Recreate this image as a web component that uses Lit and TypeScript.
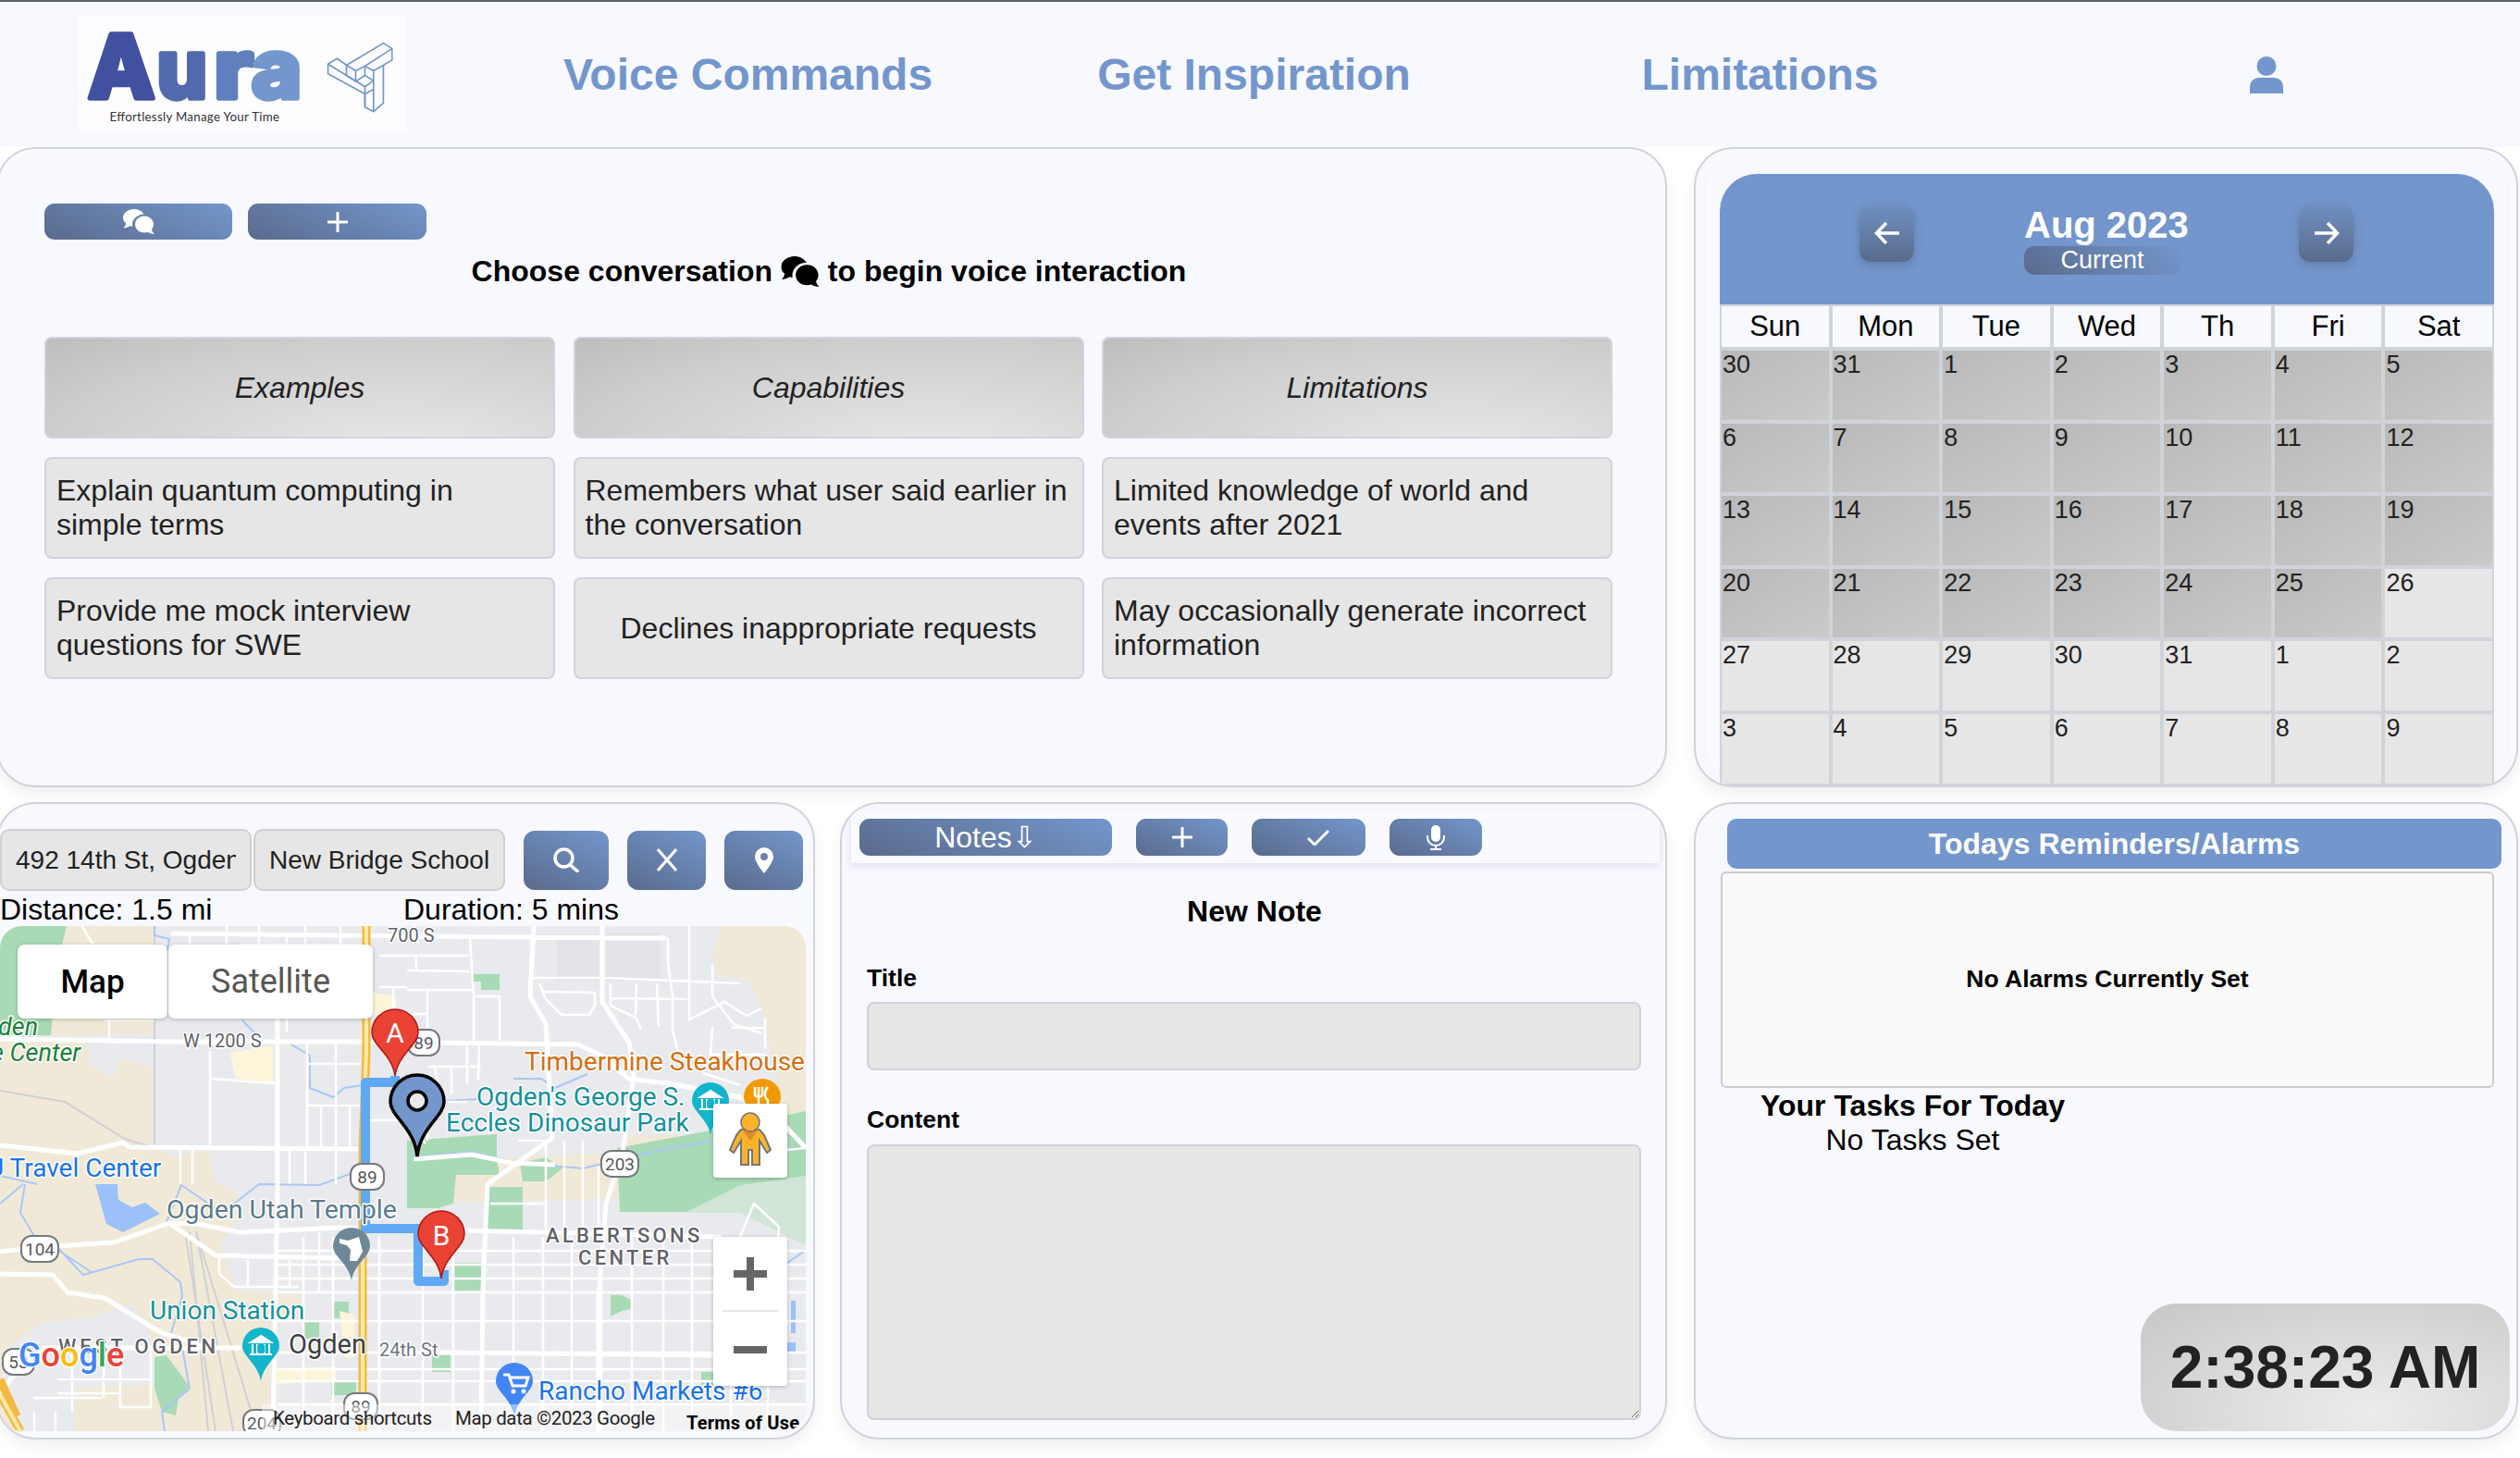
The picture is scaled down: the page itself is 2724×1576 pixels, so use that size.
import { LitElement, html, css, svg } from "lit";
import { customElement } from "lit/decorators.js";

const chatIcon = (cls: string) => svg`
  <svg class=${cls} viewBox="0 0 34 27" fill="currentColor">
    <mask id="chat-cut" maskUnits="userSpaceOnUse" x="0" y="0" width="34" height="27">
      <rect width="34" height="27" fill="#fff"/>
      <ellipse cx="23" cy="17" rx="13" ry="11.500" fill="#000"/>
    </mask>
    <path mask="url(#chat-cut)" d="M12 0C18.500 0 23.500 4.300 23.500 9.500C23.500 14.700 18.500 19 12 19C10.500 19 9 18.800 7.600 18.300C6 19.500 3.500 20.400 .5 20.500C2 19 3 17.200 3.200 15.500C1.200 13.800 0 11.800 0 9.500C0 4.300 5.500 0 12 0Z"/>
    <path d="M23 7.500C28.500 7.500 33 11.500 33 16.500C33 18.600 32.200 20.500 31 22C31.200 23.700 32.200 25.500 34 27C30.800 26.900 28.500 26.100 27 25C25.800 25.300 24.400 25.500 23 25.500C17.500 25.500 13 21.500 13 16.500C13 11.500 17.500 7.500 23 7.500Z"/>
  </svg>`;

const plusIcon = svg`<svg class="ic22" viewBox="0 0 22 22" fill="none" stroke="currentColor" stroke-width="3"><path d="M11 0v22M0 11h22"/></svg>`;

@customElement("route-map")
class RouteMap extends LitElement {
  static styles = css`
    :host {
      display: block;
      position: relative;
      width: 871px;
      height: 546px;
      overflow: hidden;
      border-radius: 24px;
      background: #e8eaed;
    }

    svg.canvas {
      display: block;
      width: 871px;
      height: 546px;
    }

    text {
      font-family: Roboto, "Liberation Sans", sans-serif;
    }

    .halo {
      paint-order: stroke;
      stroke: #fff;
      stroke-width: 3px;
      stroke-linejoin: round;
    }

    .type-btn {
      position: absolute;
      top: 20px;
      height: 80px;
      background: #fff;
      border-radius: 7px;
      box-shadow: 0 1px 4px rgba(0, 0, 0, 0.25);
      display: flex;
      align-items: center;
      justify-content: center;
      font-family: Roboto, sans-serif;
    }

    .type-map {
      left: 19px;
      width: 162px;
      color: #000;
      font-size: 35px;
      font-weight: 500;
    }

    .type-sat {
      left: 182px;
      width: 221px;
      color: #565656;
      font-size: 36px;
    }

    .ctl {
      position: absolute;
      left: 771px;
      width: 80px;
      background: #fff;
      border-radius: 3px;
      box-shadow: 0 1px 4px rgba(0, 0, 0, 0.25);
    }

    .pegman {
      top: 192px;
      height: 80px;
    }

    .zoomer {
      top: 336px;
      height: 161px;
    }

    .ctl svg {
      display: block;
      width: 80px;
      height: 100%;
    }
  `;

  private shield(x: number, y: number, label: string, w = 34) {
    return svg`
      <rect x=${x - w / 2} y=${y - 14} width=${w} height="28" rx="11" fill="#fff" stroke="#75787c" stroke-width="2"/>
      <text x=${x} y=${y + 7} text-anchor="middle" font-size="19" fill="#55585c">${label}</text>`;
  }

  private pin(cx: number, cy: number, r: number, tip: number, fill: string, stroke = "none", sw = 0) {
    const d = `M${cx} ${tip}C${cx - 3} ${cy + r * 0.95} ${cx - r} ${cy + r * 0.55} ${cx - r} ${cy}A${r} ${r} 0 1 1 ${cx + r} ${cy}C${cx + r} ${cy + r * 0.55} ${cx + 3} ${cy + r * 0.95} ${cx} ${tip}Z`;
    return svg`<path d=${d} fill=${fill} stroke=${stroke} stroke-width=${sw}/>`;
  }

  render() {
    // street grid south of 12th, the rest of the roads are listed by hand
    const southH = [351, 366, 381, 396, 427, 461, 479, 492, 517];
    const southV = [328, 360, 410, 457, 490, 555, 587, 618, 650, 683, 717, 748, 790, 830];
    const grid = [
      ...southH.map((y) => `M300 ${y}H871`),
      ...southV.map((x) => `M${x} 336V546`),
    ].join("");
    const minor = [
      "M440 32H507M450 32V48M440 48L508 49M508 14L512 76V124M462 69V124M440 69H512M512 76H540V124",
      "M573 56H653L800 62M660 62V86L687 99L693 111M660 78L743 79M688 62L687 96M710 62L712 109",
      "M722 13V39L727 76V112L733 136M745 0V101L783 82L807 97L823 89M770 42V76L793 106L823 116",
      "M827 99V133M770 109L768 139H827M790 110H827M583 62L590 79L607 96H637L643 86V72L587 71",
      "M505 129V170M518 129L517 166M488 152V181M462 152H520M470 152L476 181M760 159L800 172",
      "M227 135V240M227 165L297 170M332 125V240M363 125V240M332 149H390M332 194H390M347 194V240M378 194V240",
      "M195 240V279M208 240V279M313 240V279M330 240V279M363 240V279M112 102H167M118 102V122",
      "M237 359V376L253 390H323M268 361V390M313 361V390M345 355V395M345 331V359",
      "M78 458V525M112 458V510M130 458V520H163V458M62 490H163M62 505H130M36 510H110M37 525V546M60 525V546",
      "M590 232V329M610 232V329M630 232V329M647 260V336M560 232H590M530 300H590M400 210H440L460 235",
      "M440 190H505M462 190V232M410 32H440M410 66H440M425 66V125M410 95H462M310 10V115M205 10V60",
      "M88 -1L100 19M100 19L112 60M245 0V20M280 0V20M330 0V20M368 0V20M260 20H395",
      "M800 336L815 300L842 325L838 380M790 350H830M773 250L870 240",
    ].join("");
    const major = [
      "M0 122L180 125H395L625 128L650 140L680 165L722 170L800 185L845 212L871 240",
      "M185 8L440 11L720 13",
      "M300 100V279L295 546",
      "M651 0V82L680 126L685 162L673 245L655 300L647 400V546",
      "M577 0L573 76L590 106L597 229L527 279L522 392L520 546",
      "M0 352L43 347L123 342L183 321L213 322L260 331L367 326L587 331L780 336",
      "M183 321L233 356L367 359",
      "M0 376L57 377L73 396L113 402L173 439L225 456",
      "M45 456H260M473 461L773 464",
      "M0 237L83 246L133 234L140 239L393 241",
      "M447 252L510 247L553 256L600 258",
      "M0 506L20 478L50 456",
    ].join("");
    const creek = [
      "M0 300L25 279M27 279L22 310L40 340L60 345L90 377L150 360L165 360L195 385L197 400L185 440",
      "M55 345L100 375M167 0V10L183 14L180 30",
      "M262 102L275 115M315 128L335 140L335 175L360 185L372 175L440 165L460 190L520 187",
      "M555 165H585L600 175L635 160M445 250L510 244L560 256L630 262L700 245L780 230L800 215",
      "M840 372L871 350M195 445L205 500L175 525L178 546M0 270L40 279M180 320L196 280L240 310L280 279L345 280L395 262",
    ].join("");

    return html`
      <svg class="canvas" viewBox="0 0 871 546">
        <!-- land -->
        <path fill="#f1e9d7" d="M72 0H167V118H55L62 40Z"/>
        <path fill="#a8dab5" d="M0 0H72L62 40L55 118H0Z"/>
        <path fill="#f1e9d7" d="M0 125H95L97 150L122 165L130 143L165 152L167 240L190 250L225 240L232 277L255 285L262 310L238 345L255 395L325 395L325 425L292 425V546H0Z"/>
        <path fill="#e8eaed" d="M43 430L100 422L143 409L160 436L167 459L167 496L83 499L80 546H20L0 496L10 456Z"/>
        <path fill="#f1e9d7" d="M780 0H871V250L843 200L827 99L810 59L777 54L770 32Z"/>
        <path fill="#f1e9d7" d="M440 245L560 250L672 245L673 226L773 226L800 215L871 240V290L440 300Z"/>
        <path fill="#a8dab5" d="M440 232L537 225V252L540 269L493 269L490 300L473 305H440Z"/>
        <path fill="#a8dab5" d="M527 282H565V329H527ZM562 256L590 250L608 262L590 276L565 276ZM667 240L800 215L871 200V279L773 309H670Z"/>
        <path fill="#d0e5d5" d="M740 310L800 280L871 270V345L840 330L800 310H750Z"/>
        <path fill="#a8dab5" d="M512 52H540V69H520V60H512ZM490 364H520V394H490ZM660 399H672L682 404V414L672 416L660 422ZM467 462H487V482H467ZM758 482H772V496H758ZM360 406H377V424H360ZM327 427H345V446H327ZM358 491H385V507H358ZM167 466L180 464L205 498L193 510L190 529L175 525L167 500Z"/>
        <path fill="#fdf5d9" d="M248 137L295 129V169L255 165ZM403 72L428 76V96H403ZM295 479L363 476V490L295 496ZM367 416L383 420V466H372Z"/>
        <path fill="#e1e3e8" d="M602 16H648V59H602ZM655 7H713V59H655Z"/>
        <path fill="#9cc0f9" d="M103 279H127L128 296L143 304L157 299L173 311L133 331L115 322Z"/>
        <path fill="#9cc0f9" d="M855 405H860V440H855ZM850 450H860V460H850Z"/>
        <!-- rail and water -->
        <path d="M200 330L233 546M205 330L225 546M212 330L252 546M212 330L278 546M167 0V240M0 178L70 190L135 230L167 240" fill="none" stroke="#cdd0d6" stroke-width="2"/>
        <path d=${creek} fill="none" stroke="#a9c7f7" stroke-width="2"/>
        <!-- roads -->
        <path d=${grid} fill="none" stroke="#fff" stroke-width="2.500"/>
        <path d=${minor} fill="none" stroke="#fff" stroke-width="2.500"/>
        <path d=${major} fill="none" stroke="#fff" stroke-width="5" stroke-linejoin="round"/>
        <!-- highway 89 -->
        <path d="M396 0V135L392 240V546M0 506L22 546M0 490L18 530" fill="none" stroke="#f5b942" stroke-width="9"/>
        <path d="M396 0V135L392 240V546M0 506L22 546" fill="none" stroke="#fdeaa8" stroke-width="4"/>
        <path d="M427 162V169H395V327H452V384H480V372" fill="none" stroke="#5fa8f3" stroke-width="10" stroke-linejoin="round"/>

        <!-- labels -->
        <g font-size="27" fill="#188038" font-style="italic" class="halo">
          <text x="-2" y="118">den</text>
          <text x="-10" y="146">e Center</text>
        </g>
        <text class="halo" x="198" y="131" font-size="20" fill="#5f6368">W 1200 S</text>
        <text class="halo" x="419" y="17" font-size="20" fill="#5f6368">700 S</text>
        <text class="halo" x="-14" y="271" font-size="28" fill="#1a73e8">U Travel Center</text>
        <text class="halo" x="567" y="156" font-size="28" fill="#d56e0c">Timbermine Steakhouse</text>
        <text class="halo" x="515" y="194" font-size="28" fill="#14909c">Ogden's George S.</text>
        <text class="halo" x="482" y="222" font-size="28" fill="#14909c">Eccles Dinosaur Park</text>
        <text class="halo" x="180" y="316" font-size="28.500" fill="#5b7a8c">Ogden Utah Temple</text>
        <text class="halo" x="162" y="425" font-size="28" fill="#14909c">Union Station</text>
        <text class="halo" x="590" y="342" font-size="22" font-weight="500" letter-spacing="3.300" fill="#5f6368">ALBERTSONS</text>
        <text class="halo" x="625" y="366" font-size="22" font-weight="500" letter-spacing="3.300" fill="#5f6368">CENTER</text>
        <text class="halo" x="63" y="462" font-size="22" font-weight="500" letter-spacing="3.800" fill="#5f6368">WEST OGDEN</text>
        <text class="halo" x="312" y="462" font-size="29" fill="#3c4043">Ogden</text>
        <text class="halo" x="410" y="465" font-size="20" fill="#70757a">24th St</text>
        <text class="halo" x="582" y="512" font-size="28" fill="#1a73e8">Rancho Markets #6</text>

        ${this.shield(458, 126, "89")}
        ${this.shield(397, 271, "89", 36)}
        ${this.shield(670, 257, "203", 40)}
        ${this.shield(43, 349, "104", 40)}
        ${this.shield(390, 519, "89", 36)}
        ${this.shield(20, 471, "53", 34)}
        ${this.shield(283, 537, "204", 40)}

        <!-- points of interest -->
        ${this.pin(768, 189, 20, 226, "#12b5cb")}
        <path d="M768 178L757 185H779ZM759 187V197M764 187V197M772 187V197M777 187V197M756 198H780" stroke="#fff" stroke-width="2" fill="#fff"/>
        <text x="768" y="196" font-size="11" text-anchor="middle" fill="#12b5cb" font-weight="700">M</text>
        ${this.pin(824, 185, 20, 222, "#f29900")}
        <path d="M816 174V184M820 174V184M824 174V184M816 184H824M820 184V197M830 174C826 178 826 186 830 188V197" fill="none" stroke="#fff" stroke-width="2.500"/>
        ${this.pin(282, 454, 20, 492, "#12b5cb")}
        <path d="M282 443L271 450H293ZM273 452V462M278 452V462M286 452V462M291 452V462M270 463H294" stroke="#fff" stroke-width="2" fill="#fff"/>
        <text x="282" y="461" font-size="11" text-anchor="middle" fill="#12b5cb" font-weight="700">M</text>
        ${this.pin(556, 492, 20, 530, "#4285f4")}
        <path d="M544 485H550L554 497H568L571 488H552" fill="none" stroke="#fff" stroke-width="3"/>
        <circle cx="555" cy="503" r="2.500" fill="#fff"/><circle cx="566" cy="503" r="2.500" fill="#fff"/>
        ${this.pin(380, 346, 20, 383, "#6f8898")}
        <path d="M367 338L376 340L388 336L392 352L386 362H378L379 350L375 345L367 343Z" fill="#fff"/>

        <!-- route markers -->
        ${this.pin(427, 115, 25, 162, "#ea4335", "#b31412", 1.500)}
        <text x="427" y="126" font-size="30" text-anchor="middle" fill="#fff">A</text>
        ${this.pin(451, 190, 29, 249, "#7396cc", "#000", 3.500)}
        <circle cx="451" cy="189" r="10" fill="#e8eaed" stroke="#000" stroke-width="3.500"/>
        ${this.pin(477, 333, 25, 381, "#ea4335", "#b31412", 1.500)}
        <text x="477" y="345" font-size="30" text-anchor="middle" fill="#fff">B</text>

        <!-- google logo and footer -->
        <text x="20" y="476" font-size="36" font-weight="500" class="halo">
          <tspan fill="#4285f4">G</tspan><tspan fill="#ea4335">o</tspan><tspan fill="#fbbc05">o</tspan><tspan fill="#4285f4">g</tspan><tspan fill="#34a853">l</tspan><tspan fill="#ea4335">e</tspan>
        </text>
        <rect x="283" y="517" width="588" height="29" fill="#fff" opacity="0.45"/>
        <text x="295" y="539" font-size="20.500" fill="#222" textLength="172">Keyboard shortcuts</text>
        <text x="492" y="539" font-size="20.500" fill="#222" textLength="216">Map data ©2023 Google</text>
        <text x="742" y="544" font-size="20" font-weight="700" fill="#000" textLength="122">Terms of Use</text>
      </svg>

      <div class="type-btn type-map">Map</div>
      <div class="type-btn type-sat">Satellite</div>

      <div class="ctl pegman">
        <svg viewBox="0 0 80 80">
          <path d="M30 28L25 34L18 50L22 53L30 40V66H38V50H42V66H50V40L58 53L62 50L55 34L50 28Z" fill="#fbb32a" stroke="#70757a" stroke-width="2"/>
          <path d="M31 28H49L40 40Z" fill="#e08a2b"/>
          <circle cx="40" cy="20" r="10" fill="#fbb32a" stroke="#70757a" stroke-width="1.500"/>
        </svg>
      </div>
      <div class="ctl zoomer">
        <svg viewBox="0 0 80 161">
          <path d="M22 40H58M40 22V58M22 122H58" fill="none" stroke="#666" stroke-width="8"/>
          <path d="M10 80H70" stroke="#e6e6e6" stroke-width="2"/>
        </svg>
      </div>
    `;
  }
}

@customElement("month-calendar")
class MonthCalendar extends LitElement {
  static styles = css`
    :host {
      display: block;
      font-family: "Liberation Sans", Arial, sans-serif;
    }

    .head {
      height: 141px;
      box-sizing: border-box;
      background: #7396cc;
      border-radius: 40px 40px 0 0;
      padding: 33px 152px 0 151px;
      display: flex;
      justify-content: space-between;
      align-items: flex-start;
      color: #fff;
    }

    .nav {
      width: 59px;
      height: 62px;
      border-radius: 12px;
      background: linear-gradient(180deg, #6f90c3, #5a6b8c);
      box-shadow: 0 4px 10px rgba(50, 60, 90, 0.25);
      display: flex;
      align-items: center;
      justify-content: center;
    }

    .nav svg {
      width: 28px;
      height: 26px;
    }

    .title {
      width: 177px;
      margin: -1px 0 0 -1px;
    }

    .month {
      font-size: 40px;
      font-weight: 700;
      line-height: 46px;
      white-space: nowrap;
    }

    .current {
      width: 169px;
      height: 31px;
      border-radius: 11px;
      background: linear-gradient(45deg, #5a6b8c, #7396cc);
      font-size: 27px;
      line-height: 31px;
      text-align: center;
    }

    .grid {
      display: grid;
      grid-template-columns: repeat(7, 1fr);
      grid-template-rows: 44px repeat(6, 74.600px);
      gap: 4px;
      padding: 2px;
      background: #d1d3da;
    }

    .dow {
      background: #f8f9ff;
      color: #000;
      font-size: 31px;
      line-height: 44px;
      text-align: center;
    }

    .day {
      padding-left: 1px;
      font-size: 27px;
      line-height: 31px;
      color: #222;
      background: #e6e6e6;
    }

    .day.past {
      background: linear-gradient(150deg, #b9b9b9, #cacaca);
    }
  `;

  render() {
    const dow = ["Sun", "Mon", "Tue", "Wed", "Th", "Fri", "Sat"];
    const days = [
      30, 31, ...Array.from({ length: 31 }, (_, i) => i + 1),
      1, 2, 3, 4, 5, 6, 7, 8, 9,
    ];
    return html`
      <div class="head">
        <div class="nav">
          <svg viewBox="0 0 28 26" fill="none" stroke="currentColor" stroke-width="3.500"><path d="M27 13H3M13 2L2.500 13L13 24"/></svg>
        </div>
        <div class="title">
          <div class="month">Aug 2023</div>
          <div class="current">Current</div>
        </div>
        <div class="nav">
          <svg viewBox="0 0 28 26" fill="none" stroke="currentColor" stroke-width="3.500"><path d="M1 13H25M15 2L25.500 13L15 24"/></svg>
        </div>
      </div>
      <div class="grid">
        ${dow.map((d) => html`<div class="dow">${d}</div>`)}
        ${days.map((d, i) => html`<div class="day ${i < 27 ? "past" : ""}">${d}</div>`)}
      </div>
    `;
  }
}

@customElement("app-root")
class AppRoot extends LitElement {
  static styles = css`
    :host {
      display: block;
      width: 2724px;
      height: 1576px;
      overflow: hidden;
      background: #fff;
      font-family: "Liberation Sans", Arial, sans-serif;
      color: #000;
    }

    .top {
      height: 159px;
      box-sizing: border-box;
      border-top: 2px solid #5f6368;
      background: #f8f9ff;
      display: grid;
      grid-template-columns: 535px repeat(4, 547px);
      align-items: center;
    }

    .logo {
      display: block;
      width: 355px;
      height: 125px;
      margin-left: 84px;
      background: #fdfdff;
    }

    .logo text {
      font-family: Inter, sans-serif;
    }

    .logo .tag {
      font-family: Lato, sans-serif;
    }

    .nav-link {
      text-align: center;
      font-size: 48px;
      font-weight: 700;
      color: #7396cc;
    }

    .user {
      justify-self: center;
      width: 36px;
      height: 40px;
      color: #7396cc;
    }

    .main {
      margin-left: -4px;
      display: grid;
      grid-template-columns: 1806px 891px;
      grid-template-rows: 692px 689px;
      column-gap: 29px;
      row-gap: 16px;
    }

    .panel {
      box-sizing: border-box;
      background: #f8f9ff;
      border: 2px solid #d1d3da;
      border-radius: 42px;
      box-shadow: 0 8px 14px rgba(60, 60, 80, 0.07);
      overflow: hidden;
    }

    .btn {
      display: flex;
      align-items: center;
      justify-content: center;
      color: #fff;
      background: linear-gradient(25deg, #5a6b8c, #7396cc);
      border-radius: 11px;
    }

    .conv {
      padding: 59px 56px 0 50px;
    }

    .conv-bar {
      display: flex;
      gap: 17px;
    }

    .conv-bar .btn {
      height: 39px;
    }

    .b-chat {
      width: 203px;
    }

    .b-new {
      width: 193px;
    }

    .ic-chat {
      width: 34px;
      height: 27px;
    }

    .ic22 {
      width: 22px;
      height: 22px;
    }

    .prompt {
      margin: 16px 0 52px;
      font-size: 32px;
      font-weight: 700;
      line-height: 37px;
      text-align: center;
    }

    .prompt .ic-chat {
      width: 42px;
      height: 33px;
      vertical-align: -6px;
    }

    .cards {
      display: grid;
      grid-template-columns: repeat(3, 552px);
      grid-template-rows: 110px 110px 110px;
      column-gap: 19.500px;
      row-gap: 20px;
    }

    .card {
      box-sizing: border-box;
      display: flex;
      align-items: center;
      justify-content: center;
      padding: 0 11px;
      border: 2px solid #d1d3da;
      border-radius: 8px;
      background: #e6e6e6;
      font-size: 32px;
      line-height: 37px;
      color: #222;
    }

    .card > div {
      width: 100%;
    }

    .card.head {
      font-style: italic;
      background: radial-gradient(ellipse at 70% 115%, #e8e8e8 0%, #cdcdcd 70%, #bdbdbd 100%);
    }

    .cal-panel {
      padding: 27px 24px 0 26px;
      box-shadow: 0 8px 14px rgba(60, 60, 80, 0.07), inset 0 0 0 9px #f8f9ff, inset 0 0 0 10px #f2f3f9;
    }

    .bottom-left {
      display: grid;
      grid-template-columns: 885px 894px;
      column-gap: 27px;
    }

    .map-panel {
      padding: 27px 0 0 2px;
    }

    .route-bar {
      display: flex;
      align-items: center;
    }

    .field {
      box-sizing: border-box;
      width: 272px;
      height: 67px;
      margin-right: 2px;
      padding: 0 15px;
      border: 2px solid #cfd0d4;
      border-radius: 10px;
      background: #e6e6e6;
      font-size: 28px;
      line-height: 63px;
      color: #222;
    }

    .field div {
      overflow: hidden;
      white-space: nowrap;
    }

    .route-bar .btn {
      height: 64px;
      margin-left: 20px;
      border-radius: 12px;
    }

    .route-bar .btn svg {
      display: block;
    }

    .route-bar .b-search {
      width: 92px;
      margin-left: 18px;
    }

    .b-x,
    .b-pin {
      width: 85px;
    }

    .stats {
      display: grid;
      grid-template-columns: 436px 436px;
      margin-top: 2px;
      font-size: 32px;
      line-height: 36px;
      color: #000;
    }

    .notes-bar {
      display: flex;
      gap: 26px;
      height: 57px;
      box-sizing: border-box;
      margin: 7px 6px 0 10px;
      padding: 9px 0 0 9px;
      background: #f9faff;
      box-shadow: 0 4px 8px rgba(60, 60, 80, 0.12);
    }

    .notes-bar .btn {
      height: 40px;
    }

    .b-notes {
      width: 273px;
      font-size: 32px;
    }

    .b-add {
      width: 99px;
    }

    .b-check {
      width: 123px;
      box-sizing: border-box;
      padding-left: 21px;
    }

    .b-mic {
      width: 100px;
    }

    .note-form {
      margin: 0 6px 0 10px;
      display: flex;
      flex-direction: column;
      padding: 0 19px 0 17px;
    }

    .note-title {
      margin-top: 34px;
      font-size: 32px;
      font-weight: 700;
      line-height: 37px;
      text-align: center;
    }

    .note-label {
      font-size: 26.500px;
      font-weight: 700;
      line-height: 30px;
    }

    .l-title {
      margin-top: 38px;
    }

    .l-content {
      margin-top: 38px;
    }

    .note-box {
      display: block;
      box-sizing: border-box;
      width: 837px;
      border: 2px solid #d1d3da;
      border-radius: 8px;
      background: #e6e6e6;
      outline: none;
    }

    .n-title {
      margin-top: 11px;
      height: 74px;
    }

    .n-content {
      margin-top: 12px;
      height: 298px;
      resize: vertical;
    }

    .remind {
      display: flex;
      flex-direction: column;
    }

    .remind-bar {
      margin: 16px 16px 0 34px;
      height: 54px;
      border-radius: 10px;
      background: #7396cc;
      color: #fff;
      font-size: 32px;
      font-weight: 700;
      line-height: 54px;
      text-align: center;
    }

    .alarms {
      box-sizing: border-box;
      height: 234px;
      margin: 3px 24px 0 27px;
      padding-top: 99px;
      border: 2px solid #cbcbcf;
      border-radius: 6px;
      background: #f9f9f9;
      font-size: 26.500px;
      font-weight: 700;
      line-height: 30px;
      text-align: center;
    }

    .tasks {
      align-self: flex-start;
      margin: 1px 0 0 70px;
      font-size: 32px;
      line-height: 37px;
      text-align: center;
    }

    .tasks b {
      display: block;
    }

    .clock {
      align-self: flex-end;
      width: 399px;
      height: 138px;
      margin: auto 7px 7px 0;
      border-radius: 38px;
      background: radial-gradient(ellipse at 62% 85%, #ececec 0%, #dcdcdc 45%, #c6c6c6 100%);
      display: flex;
      align-items: center;
      justify-content: center;
      font-size: 64px;
      font-weight: 700;
      color: #222;
    }
  `;

  render() {
    return html`
      <header class="top">
        <svg class="logo" viewBox="42 24 1066 376">
          <g font-weight="800" stroke-width="16" stroke-linejoin="round">
            <text x="74" y="290" font-size="285" fill="#41509f" stroke="#41509f" textLength="218" lengthAdjust="spacingAndGlyphs">A</text>
            <text x="298" y="290" font-size="266" fill="#5269ad" stroke="#5269ad" textLength="164" lengthAdjust="spacingAndGlyphs">u</text>
            <text x="484" y="290" font-size="266" fill="#6080bd" stroke="#6080bd" textLength="128" lengthAdjust="spacingAndGlyphs">r</text>
            <text x="606" y="290" font-size="266" fill="#7396cc" stroke="#7396cc" textLength="164" lengthAdjust="spacingAndGlyphs">a</text>
          </g>
          <text class="tag" x="145" y="363" font-size="40" fill="#333" textLength="552">Effortlessly Manage Your Time</text>
          <g fill="none" stroke="#7396cc" stroke-width="5" stroke-linejoin="round">
            <path d="M855 178L885 160L915 182L1035 110L1063 128V165L1035 182V305L1003 333L975 318V275L855 210Z"/>
            <path d="M855 178L975 252L1003 232M975 252V318M1003 332V195M1063 128L975 185L1003 200L1035 182"/>
            <path d="M915 182L945 200V235M945 200L975 185V215L945 235L915 215V182M975 215L1003 232M975 275L1003 260"/>
          </g>
        </svg>
        <div class="nav-link">Voice Commands</div>
        <div class="nav-link">Get Inspiration</div>
        <div class="nav-link">Limitations</div>
        <svg class="user" viewBox="0 0 36 40" fill="currentColor">
          <circle cx="18" cy="10.500" r="10.500"/>
          <path d="M0 40V33C0 26.500 5 23 10 23H26C31 23 36 26.500 36 33V40Z"/>
        </svg>
      </header>

      <div class="main">
        <section class="panel conv">
          <div class="conv-bar">
            <div class="btn b-chat">${chatIcon("ic-chat")}</div>
            <div class="btn b-new">${plusIcon}</div>
          </div>
          <div class="prompt">Choose conversation ${chatIcon("ic-chat")} to begin voice interaction</div>
          <div class="cards">
            <div class="card head">Examples</div>
            <div class="card head">Capabilities</div>
            <div class="card head">Limitations</div>
            <div class="card">Explain quantum computing in simple terms</div>
            <div class="card">Remembers what user said earlier in the conversation</div>
            <div class="card">Limited knowledge of world and events after 2021</div>
            <div class="card"><div>Provide me mock interview<br />questions for SWE</div></div>
            <div class="card">Declines inappropriate requests</div>
            <div class="card">May occasionally generate incorrect information</div>
          </div>
        </section>

        <section class="panel cal-panel">
          <month-calendar></month-calendar>
        </section>

        <div class="bottom-left">
          <section class="panel map-panel">
            <div class="route-bar">
              <div class="field"><div>492 14th St, Ogden</div></div>
              <div class="field"><div>New Bridge School</div></div>
              <div class="btn b-search">
                <svg width="28" height="27" viewBox="0 0 28 27" fill="none" stroke="currentColor" stroke-width="3.500"><circle cx="11.500" cy="11.500" r="9.500"/><path d="M18 18.500L27 26.500"/></svg>
              </div>
              <div class="btn b-x">
                <svg width="22" height="25" viewBox="0 0 22 25" fill="none" stroke="currentColor" stroke-width="3"><path d="M1 1L21 24M21 1L1 24"/></svg>
              </div>
              <div class="btn b-pin">
                <svg width="20" height="28" viewBox="0 0 20 28" fill="currentColor"><path fill-rule="evenodd" d="M10 28C10 28 20 16.500 20 10A10 10 0 0 0 0 10C0 16.500 10 28 10 28ZM10 14A4 4 0 1 0 10 6A4 4 0 0 0 10 14Z"/></svg>
              </div>
            </div>
            <div class="stats">
              <div>Distance: 1.5 mi</div>
              <div>Duration: 5 mins</div>
            </div>
            <route-map></route-map>
          </section>

          <section class="panel notes">
            <div class="notes-bar">
              <div class="btn b-notes">Notes⇩</div>
              <div class="btn b-add">${plusIcon}</div>
              <div class="btn b-check">
                <svg width="24" height="17" viewBox="0 0 24 17" fill="none" stroke="currentColor" stroke-width="3"><path d="M1 9L8 16L23 1"/></svg>
              </div>
              <div class="btn b-mic">
                <svg width="20" height="27" viewBox="0 0 20 27" fill="currentColor"><rect x="5" y="0" width="10" height="18" rx="5"/><path d="M1 11V13A9 9 0 0 0 19 13V11" fill="none" stroke="currentColor" stroke-width="2"/><path d="M9 21H11V25H16V27H4V25H9Z"/></svg>
              </div>
            </div>
            <div class="note-form">
              <div class="note-title">New Note</div>
              <div class="note-label l-title">Title</div>
              <input class="note-box n-title" type="text" />
              <div class="note-label l-content">Content</div>
              <textarea class="note-box n-content"></textarea>
            </div>
          </section>
        </div>

        <section class="panel remind">
          <div class="remind-bar">Todays Reminders/Alarms</div>
          <div class="alarms">No Alarms Currently Set</div>
          <div class="tasks">
            <b>Your Tasks For Today</b>
            No Tasks Set
          </div>
          <div class="clock">2:38:23 AM</div>
        </section>
      </div>
    `;
  }
}
